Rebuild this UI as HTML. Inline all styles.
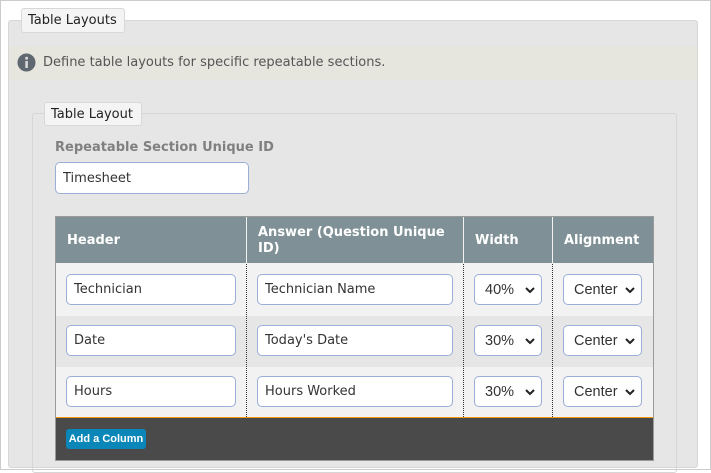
<!DOCTYPE html>
<html><head><style>
*{box-sizing:border-box;margin:0;padding:0}
body{width:711px;height:470px;background:#fff;font-family:"DejaVu Sans","Liberation Sans",sans-serif;font-size:13px;color:#333;position:relative;overflow:hidden}
.abs{position:absolute;white-space:nowrap}
.legend{background:#f4f4f4;border:1px solid #d8d8d8;border-radius:3px;font-size:13px;color:#222;padding:0 6px;line-height:23px}
input,.sel{position:absolute;background:#fff;border:1px solid #9aaed8;border-radius:5px;font:13px "DejaVu Sans",sans-serif;color:#333;padding-left:7px;line-height:31px;height:31px}
.sel{font-family:"Liberation Sans",sans-serif;font-size:14.5px;padding-left:10px}
.sel svg{position:absolute;right:6px;top:12px}
.hd{position:absolute;top:217px;height:46px;background:#7f9196;color:#fff;font-weight:bold;font-size:13px;padding:2px 11px 0;display:flex;align-items:center;line-height:16px}
</style></head><body>
<div class="abs" style="left:0;top:0;width:711px;height:470px;border:1px solid #ccc"></div>
<div class="abs" style="left:8px;top:20px;width:690px;height:448px;background:#e6e6e6;border:1px solid #d6d6d6;border-radius:3px"></div>
<div class="abs legend" style="left:21px;top:8px;width:104px;height:25px">Table Layouts</div>
<div class="abs" style="left:9px;top:46px;width:688px;height:34px;background:#e6e5de"></div>
<svg class="abs" style="left:17px;top:53px" width="19" height="19"><circle cx="9.5" cy="9.5" r="9" fill="#5f6770"/><rect x="8.3" y="8" width="2.6" height="7" fill="#d8d8d8"/><circle cx="9.6" cy="5.3" r="1.5" fill="#d8d8d8"/></svg>
<div class="abs" style="left:43px;top:55px;color:#555;font-size:13px">Define table layouts for specific repeatable sections.</div>
<div class="abs" style="left:32px;top:113px;width:645px;height:360px;border:1px solid #d6d6d6;border-radius:3px"></div>
<div class="abs legend" style="left:44px;top:102px;width:98px;height:24px">Table Layout</div>
<div class="abs" style="left:55px;top:140px;font-weight:bold;color:#808080;font-size:13px">Repeatable Section Unique ID</div>
<input style="left:55px;top:162px;width:194px;height:32px" value="Timesheet">
<div class="abs" style="left:55px;top:216px;width:599px;height:245px;border:1px solid #9a9a9a;background:#f2f2f2"></div>
<div class="abs" style="left:56px;top:316px;width:597px;height:51px;background:#e6e6e6"></div>
<div class="hd" style="left:56px;width:190px">Header</div>
<div class="hd" style="left:247px;width:216px;white-space:normal">Answer (Question Unique ID)</div>
<div class="hd" style="left:464px;width:88px">Width</div>
<div class="hd" style="left:553px;width:100px">Alignment</div>
<div class="abs" style="left:246px;top:264px;height:153px;border-left:1px dotted #333"></div>
<div class="abs" style="left:463px;top:264px;height:153px;border-left:1px dotted #333"></div>
<div class="abs" style="left:552px;top:264px;height:153px;border-left:1px dotted #333"></div>
<div class="abs" style="left:56px;top:417px;width:597px;height:43px;background:#4a4a4a;border-top:1px solid #f29a10"></div>
<div class="abs" style="left:66px;top:429px;width:80px;height:20px;background:#0a86b8;border-radius:3px;color:#fff;font:bold 11px 'Liberation Sans',sans-serif;line-height:20px;text-align:center">Add a Column</div>

<input style="left:66px;top:274px;width:170px" value="Technician">
<input style="left:257px;top:274px;width:196px" value="Technician Name">
<div class="sel" style="left:474px;top:274px;width:68px">40%<svg width="10" height="7"><path d="M1 1l4 4 4-4" stroke="#222" stroke-width="2" fill="none"/></svg></div>
<div class="sel" style="left:563px;top:274px;width:79px">Center<svg width="10" height="7"><path d="M1 1l4 4 4-4" stroke="#222" stroke-width="2" fill="none"/></svg></div>

<input style="left:66px;top:325px;width:170px" value="Date">
<input style="left:257px;top:325px;width:196px" value="Today's Date">
<div class="sel" style="left:474px;top:325px;width:68px">30%<svg width="10" height="7"><path d="M1 1l4 4 4-4" stroke="#222" stroke-width="2" fill="none"/></svg></div>
<div class="sel" style="left:563px;top:325px;width:79px">Center<svg width="10" height="7"><path d="M1 1l4 4 4-4" stroke="#222" stroke-width="2" fill="none"/></svg></div>

<input style="left:66px;top:376px;width:170px" value="Hours">
<input style="left:257px;top:376px;width:196px" value="Hours Worked">
<div class="sel" style="left:474px;top:376px;width:68px">30%<svg width="10" height="7"><path d="M1 1l4 4 4-4" stroke="#222" stroke-width="2" fill="none"/></svg></div>
<div class="sel" style="left:563px;top:376px;width:79px">Center<svg width="10" height="7"><path d="M1 1l4 4 4-4" stroke="#222" stroke-width="2" fill="none"/></svg></div>
</body></html>
